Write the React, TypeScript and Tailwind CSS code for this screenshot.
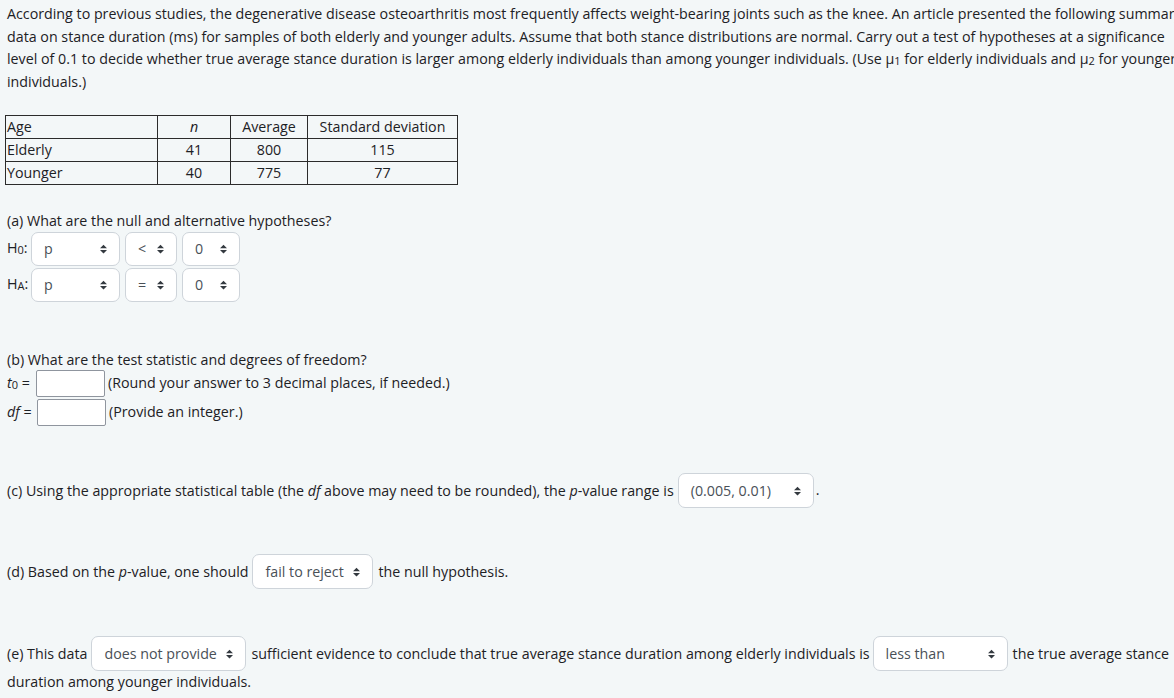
import type { ReactNode } from 'react';

const Chevron = () => (
  <svg width="7" height="10" viewBox="0 0 4 5" className="shrink-0">
    <path fill="#343a40" d="M2 0L0 2h4zm0 5L0 3h4z" />
  </svg>
);

const Select = ({ value, w, h = 'h-[35px]' }: { value: string; w: string; h?: string }) => (
  <div
    className={`relative inline-flex shrink-0 items-center rounded-[7px] border border-[#ced4da] bg-white pl-[12px] pt-px text-[#495057] ${w} ${h}`}
  >
    <span className="whitespace-nowrap">{value}</span>
    <span className="absolute right-[12px] top-1/2 -translate-y-1/2">
      <Chevron />
    </span>
  </div>
);

const Sub = ({ children }: { children: ReactNode }) => (
  <sub className="relative top-[1px] text-[11px]">{children}</sub>
);

const Input = () => (
  <div className="h-[27px] w-[69px] rounded-[2px] border border-[#8f959e] bg-white" />
);

export default function App() {
  return (
    <div
      className="min-h-screen w-full overflow-hidden bg-[#f3f7f8] text-[#1d2125]"
      style={{ fontFamily: '"Open Sans", "Noto Sans", sans-serif' }}
    >
      <div className="w-[1200px] pl-[6px] pt-[2px] text-[14.25px] leading-[22.5px]">
        <p className="pl-px pt-px">
          <span className="block whitespace-nowrap">
            According to previous studies, the degenerative disease osteoarthritis most frequently affects weight-bearing joints such as the knee. An article presented the following summary
          </span>
          <span className="block whitespace-nowrap">
            data on stance duration (ms) for samples of both elderly and younger adults. Assume that both stance distributions are normal. Carry out a test of hypotheses at a significance
          </span>
          <span className="block whitespace-nowrap">
            level of 0.1 to decide whether true average stance duration is larger among elderly individuals than among younger individuals. (Use μ<Sub>1</Sub> for elderly individuals and μ<Sub>2</Sub> for younger
          </span>
          <span className="block whitespace-nowrap">individuals.)</span>
        </p>

        <table className="-ml-px mt-[22px] border-collapse leading-[20px]">
          <tbody>
            {[
              ['Age', 'n', 'Average', 'Standard deviation'],
              ['Elderly', '41', '800', '115'],
              ['Younger', '40', '775', '77'],
            ].map((r, i) => (
              <tr key={i} className="h-[23px]">
                <td className="w-[152px] border border-[#2b2b2b] px-px">{r[0]}</td>
                <td className={`w-[73px] border border-[#2b2b2b] text-center ${i === 0 ? 'italic' : ''}`}>{r[1]}</td>
                <td className="w-[77px] border border-[#2b2b2b] text-center">{r[2]}</td>
                <td className="w-[150px] border border-[#2b2b2b] text-center">{r[3]}</td>
              </tr>
            ))}
          </tbody>
        </table>

        <div className="mt-[25px] pl-px">(a) What are the null and alternative hypotheses?</div>
        <div className="-mt-px flex flex-col gap-[2px] pl-px">
          {[
            ['0', '<'],
            ['A', '='],
          ].map(([s, op]) => (
            <div key={s} className="flex items-center">
              <span className="w-[24px]">
                H<Sub>{s}</Sub>:
              </span>
              <div className="flex gap-[5px]">
                <Select value="p" w="w-[89px]" h="h-[34px]" />
                <Select value={op} w="w-[52px]" h="h-[34px]" />
                <Select value="0" w="w-[58px]" h="h-[34px]" />
              </div>
            </div>
          ))}
        </div>

        <div className="mt-[47px] pl-px">(b) What are the test statistic and degrees of freedom?</div>
        <div className="-mt-px flex flex-col gap-[2px] pl-px">
          <div className="flex items-center">
            <span className="w-[29px] whitespace-nowrap">
              <i>t</i>
              <Sub>0</Sub> =
            </span>
            <Input />
            <span className="ml-[3px]">(Round your answer to 3 decimal places, if needed.)</span>
          </div>
          <div className="flex items-center">
            <span className="w-[30px] whitespace-nowrap">
              <i>df</i> =
            </span>
            <Input />
            <span className="ml-[3px]">(Provide an integer.)</span>
          </div>
        </div>

        <div className="mt-[47px] flex items-center pl-px">
          <span className="whitespace-nowrap pt-px">
            (c) Using the appropriate statistical table (the <i>df</i> above may need to be rounded), the <i>p</i>-value range is
          </span>
          <span className="ml-[4px]">
            <Select value="(0.005, 0.01)" w="w-[136px]" />
          </span>
          <span className="ml-[2px]">.</span>
        </div>

        <div className="mt-[46px] flex items-center pl-px">
          <span className="whitespace-nowrap pt-px">
            (d) Based on the <i>p</i>-value, one should
          </span>
          <span className="ml-[4px]">
            <Select value="fail to reject" w="w-[121px]" />
          </span>
          <span className="ml-[5px] pt-px">the null hypothesis.</span>
        </div>

        <div className="mt-[47px] flex items-center pl-px">
          <span className="whitespace-nowrap pt-px">(e) This data</span>
          <span className="ml-[4px]">
            <Select value="does not provide" w="w-[155px]" />
          </span>
          <span className="ml-[5px] whitespace-nowrap pt-px">
            sufficient evidence to conclude that true average stance duration among elderly individuals is
          </span>
          <span className="ml-[3px]">
            <Select value="less than" w="w-[135px]" />
          </span>
          <span className="ml-[5px] whitespace-nowrap pt-px">the true average stance</span>
        </div>
        <div className="pl-px">duration among younger individuals.</div>
      </div>
    </div>
  );
}
